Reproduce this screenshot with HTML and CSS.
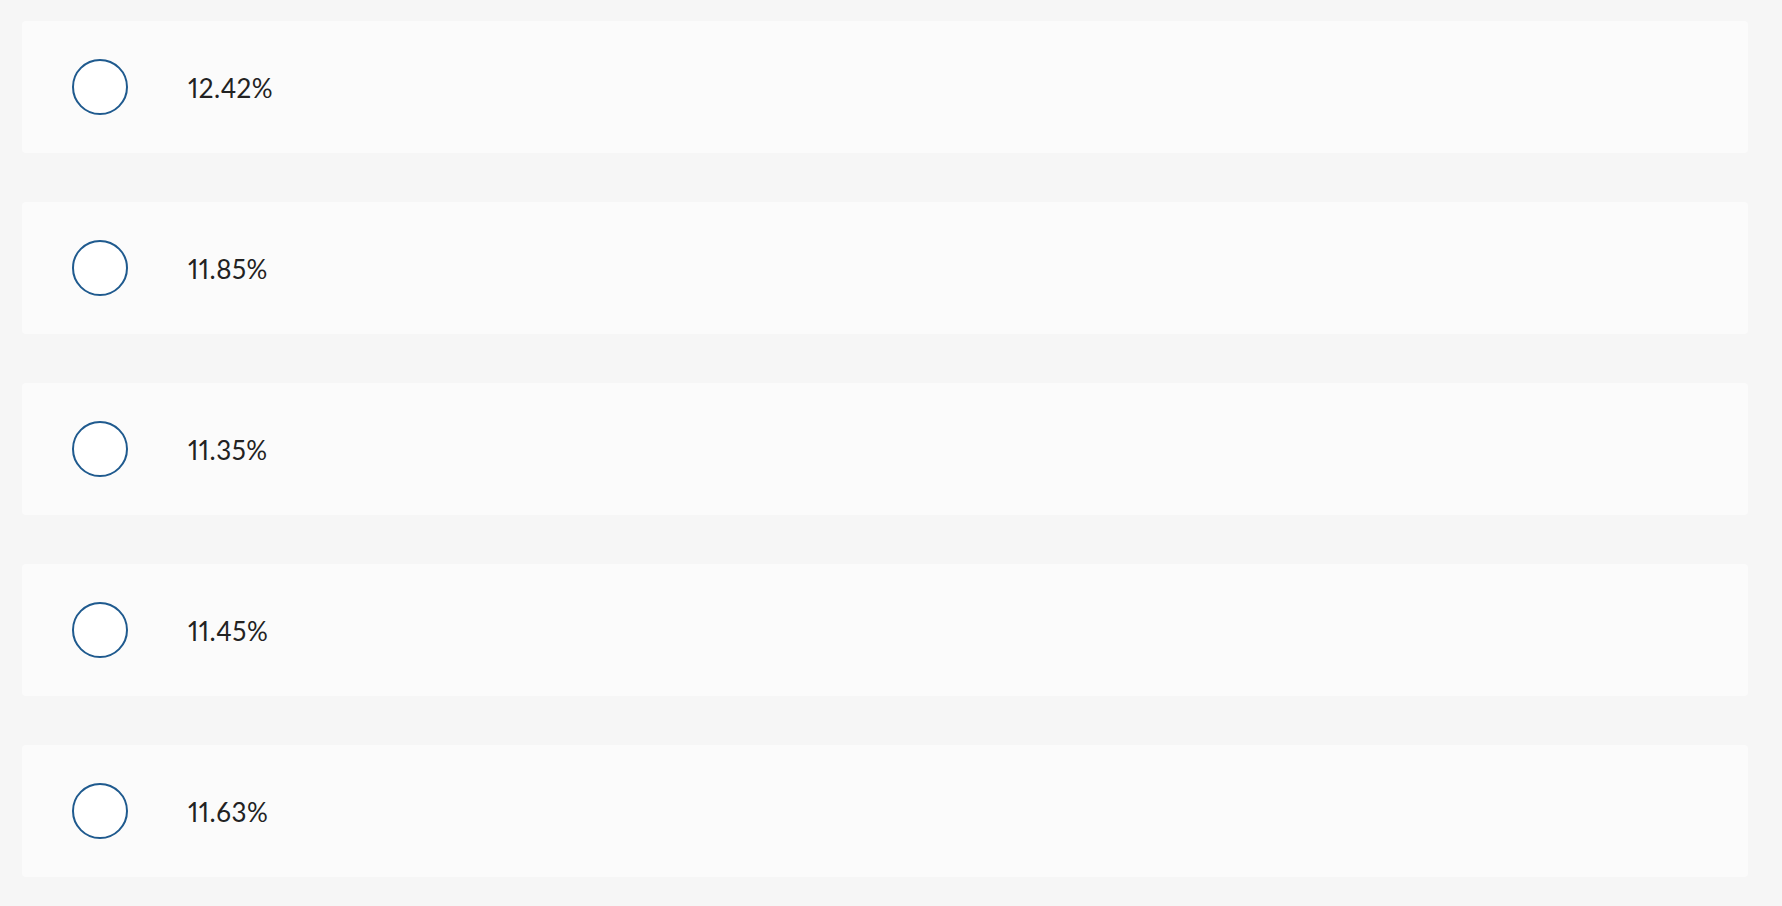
FILE: index.html
```html
<!DOCTYPE html>
<html lang="en">
<head>
    <meta charset="UTF-8">
    <meta name="viewport" content="width=device-width, initial-scale=1.0">
    <title>Opciones</title>
    <link rel="stylesheet" href="styles.css">
</head>
<body>
    <div class="choices">
        <label class="choice">
            <span class="radio"></span>
            <span class="choice-text">12.42%</span>
        </label>
        <label class="choice">
            <span class="radio"></span>
            <span class="choice-text">11.85%</span>
        </label>
        <label class="choice">
            <span class="radio"></span>
            <span class="choice-text">11.35%</span>
        </label>
        <label class="choice">
            <span class="radio"></span>
            <span class="choice-text">11.45%</span>
        </label>
        <label class="choice">
            <span class="radio"></span>
            <span class="choice-text">11.63%</span>
        </label>
    </div>
</body>
</html>
```

FILE: styles.css
```css
:root {
  --page-bg: #f6f6f6;
  --card-bg: #fbfbfb;
  --radio-blue: #1f5a8e;
  --text: #222222;
}
body {
  margin: 0;
  background-color: var(--page-bg);
  font-family: 'Lato', 'Open Sans', sans-serif;
}
.choices {
  display: flex;
  flex-direction: column;
  gap: 49px;
  padding: 21px 34px 21px 22px;
}
.choice {
  display: flex;
  align-items: center;
  height: 132px;
  padding-left: 50px;
  background-color: var(--card-bg);
  border-radius: 4px;
  cursor: pointer;
}
.radio {
  box-sizing: border-box;
  width: 56px;
  height: 56px;
  border: 2px solid var(--radio-blue);
  border-radius: 50%;
  background-color: #ffffff;
  flex-shrink: 0;
}
.choice-text {
  margin-left: 60px;
  margin-top: 2px;
  font-size: 26px;
  letter-spacing: 0.5px;
  font-variant-numeric: proportional-nums;
  color: var(--text);
}
```
